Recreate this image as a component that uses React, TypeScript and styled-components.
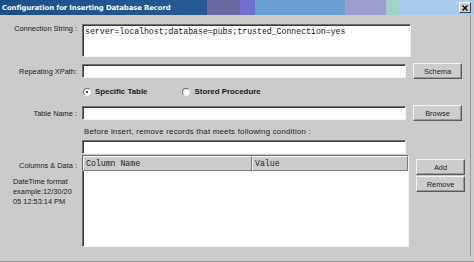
import styled, { createGlobalStyle } from 'styled-components';

const GlobalStyle = createGlobalStyle`
  html, body {
    margin: 0;
    padding: 0;
    background: #cbcbcb;
  }
`;

const Window = styled.div`
  position: relative;
  width: 474px;
  height: 262px;
  background: #cbcbcb;
  font-family: 'Liberation Sans', Arial, sans-serif;
  font-size: 7.4px;
  color: #1a1a1a;
  box-sizing: border-box;
  border-bottom: 1px solid #9a9a9a;
  overflow: hidden;
`;

const TitleBar = styled.div`
  height: 15px;
  display: flex;
  align-items: center;
  justify-content: space-between;
  padding: 0 3px 0 2px;
  background: linear-gradient(
    to right,
    #1c4f8d 0px,
    #265a94 207px,
    #6a6aa2 207px,
    #6a6aa2 240px,
    #7070cf 240px,
    #7070cf 255px,
    #6aa0d4 255px,
    #6aa0d4 345px,
    #9d9dd0 345px,
    #9d9dd0 386px,
    #a2d2c6 386px,
    #a2d2c6 400px,
    #a9c9ef 400px
  );
`;

const Title = styled.span`
  color: #fff;
  font-family: 'DejaVu Sans', Verdana, sans-serif;
  font-weight: bold;
  font-size: 6.9px;
  letter-spacing: -0.1px;
`;

const CloseButton = styled.div`
  width: 10px;
  height: 9px;
  background: #d4d0c8;
  border: 1px solid;
  border-color: #fff #404040 #404040 #fff;
  display: flex;
  align-items: center;
  justify-content: center;
`;

const Body = styled.div`
  display: flex;
  flex-direction: column;
  padding: 9px 0 0 0;
  border-right: 1px solid #9a9a9a;
  height: 232px;
  width: 470px;
  box-sizing: content-box;
`;

const Row = styled.div<{ $top?: number; $align?: string }>`
  display: flex;
  align-items: ${({ $align }) => $align || 'center'};
  margin-top: ${({ $top }) => $top ?? 0}px;
`;

const Label = styled.div<{ $pad?: number }>`
  width: 77px;
  padding-right: 5px;
  text-align: right;
  white-space: nowrap;
  padding-top: ${({ $pad }) => $pad ?? 0}px;
  flex-shrink: 0;
`;

const Sunken = styled.div`
  background: #fff;
  border: 1px solid;
  border-color: #6e6e6e #f2f2f2 #f2f2f2 #6e6e6e;
  box-shadow: inset 1px 1px 0 #3c3c3c;
  box-sizing: border-box;
`;

const TextArea = styled(Sunken)`
  width: 329px;
  height: 33px;
  padding: 2px 2px;
  font-family: 'Liberation Mono', 'Courier New', monospace;
  font-size: 8.2px;
  color: #111;
`;

const Input = styled(Sunken)<{ $width?: number }>`
  width: ${({ $width }) => $width ?? 324}px;
  height: 14px;
`;

const Button = styled.div<{ $height?: number }>`
  width: 49px;
  height: ${({ $height }) => $height ?? 16}px;
  margin-left: 7px;
  box-sizing: border-box;
  background: #cdcdcd;
  border: 1px solid;
  border-color: #f4f4f4 #5a5a5a #5a5a5a #f4f4f4;
  box-shadow: inset -1px -1px 0 #9a9a9a;
  display: flex;
  align-items: center;
  justify-content: center;
  color: #222;
`;

const RadioGroup = styled.div`
  display: flex;
  align-items: center;
  gap: 35px;
  padding-left: 83px;
`;

const RadioOption = styled.div`
  display: flex;
  align-items: center;
  gap: 4px;
  font-weight: bold;
  font-size: 7.9px;
`;

const RadioDot = styled.span<{ $checked?: boolean }>`
  width: 8px;
  height: 8px;
  border-radius: 50%;
  box-sizing: border-box;
  background: #fff;
  border: 1px solid;
  border-color: #6e6e6e #eee #eee #6e6e6e;
  display: flex;
  align-items: center;
  justify-content: center;

  &::after {
    content: '';
    width: 2px;
    height: 2px;
    border-radius: 50%;
    background: ${({ $checked }) => ($checked ? '#111' : 'transparent')};
  }
`;

const Caption = styled.div`
  padding-left: 84px;
  font-size: 7.8px;
  letter-spacing: 0.25px;
`;

const SideButtons = styled.div`
  display: flex;
  flex-direction: column;
  gap: 1px;
  padding-top: 4px;
`;

const LeftColumn = styled.div`
  width: 82px;
  flex-shrink: 0;
  display: flex;
  flex-direction: column;
`;

const Note = styled.div`
  padding-left: 13px;
  margin-top: 7px;
  line-height: 10px;
  width: 60px;
  overflow-wrap: anywhere;
`;

const Grid = styled(Sunken)`
  width: 327px;
  height: 92px;
  display: flex;
  flex-direction: column;
  font-family: 'Liberation Mono', 'Courier New', monospace;
  font-size: 8.2px;
`;

const GridHeader = styled.div`
  display: flex;
  height: 15px;
  background: #cbcbcb;
`;

const HeaderCell = styled.div<{ $width?: number }>`
  width: ${({ $width }) => ($width ? `${$width}px` : 'auto')};
  flex: ${({ $width }) => ($width ? '0 0 auto' : '1')};
  box-sizing: border-box;
  border: 1px solid;
  border-color: #f2f2f2 #7a7a7a #7a7a7a #f2f2f2;
  padding: 0 2px;
  display: flex;
  align-items: center;
  color: #222;
`;

export default function App() {
  return (
    <>
      <GlobalStyle />
      <Window>
        <TitleBar>
          <Title>Configuration for Inserting Database Record</Title>
          <CloseButton>
            <svg width="6" height="6" viewBox="0 0 6 6">
              <path d="M0.5 0.5 L5.5 5.5 M5.5 0.5 L0.5 5.5" stroke="#000" strokeWidth="1.4" />
            </svg>
          </CloseButton>
        </TitleBar>
        <Body>
          <Row $align="flex-start">
            <Label $pad={0}>Connection String :</Label>
            <TextArea>server=localhost;database=pubs;trusted_Connection=yes</TextArea>
          </Row>
          <Row $top={6}>
            <Label>Repeating XPath:</Label>
            <Input />
            <Button $height={16}>Schema</Button>
          </Row>
          <Row $top={8}>
            <RadioGroup>
              <RadioOption>
                <RadioDot $checked />
                Specific Table
              </RadioOption>
              <RadioOption>
                <RadioDot />
                Stored Procedure
              </RadioOption>
            </RadioGroup>
          </Row>
          <Row $top={9}>
            <Label>Table Name :</Label>
            <Input />
            <Button $height={16}>Browse</Button>
          </Row>
          <Row $top={6}>
            <Caption>Before insert, remove records that meets following condition :</Caption>
          </Row>
          <Row $top={4}>
            <Label />
            <Input />
          </Row>
          <Row $top={1} $align="flex-start">
            <LeftColumn>
              <Label $pad={6}>Columns &amp; Data :</Label>
              <Note>DateTime format example:12/30/2005 12:53:14 PM</Note>
            </LeftColumn>
            <Grid>
              <GridHeader>
                <HeaderCell $width={169}>Column Name</HeaderCell>
                <HeaderCell>Value</HeaderCell>
              </GridHeader>
            </Grid>
            <SideButtons>
              <Button>Add</Button>
              <Button>Remove</Button>
            </SideButtons>
          </Row>
        </Body>
      </Window>
    </>
  );
}
